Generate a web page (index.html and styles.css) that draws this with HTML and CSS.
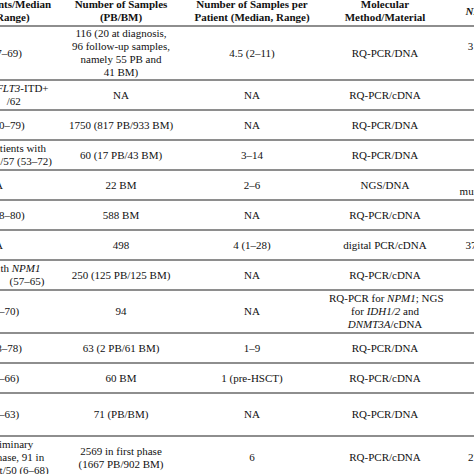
FILE: index.html
```html
<!DOCTYPE html>
<html lang="en">
<head>
<meta charset="utf-8">
<title>Table</title>
<link rel="stylesheet" href="styles.css">
</head>
<body>
<div class="viewport">
<table class="tbl">
<colgroup>
<col class="c1"><col class="c2"><col class="c3"><col class="c4"><col class="c5">
</colgroup>
<thead>
<tr>
<th class="first-head">Nos. of Patients/Median<br>Age, y (Range)</th>
<th>Number of Samples<br>(PB/BM)</th>
<th>Number of Samples per<br>Patient (Median, Range)</th>
<th>Molecular<br>Method/Material</th>
<th><i>NPM1</i> Kinetics</th>
</tr>
</thead>
<tbody>
<tr class="tall">
<td>158 (17–69)</td>
<td>116 (20 at diagnosis,<br>96 follow-up samples,<br>namely 55 PB and<br>41 BM)</td>
<td>4.5 (2–11)</td>
<td>RQ-PCR/DNA</td>
<td>3 log reduction<br>in PB</td>
</tr>
<tr>
<td>and 45 with <i>FLT3</i>-ITD+<br>pts.&emsp;&emsp;/62</td>
<td>NA</td>
<td>NA</td>
<td>RQ-PCR/cDNA</td>
<td>NA</td>
</tr>
<tr>
<td>1349 (20–79)</td>
<td>1750 (817 PB/933 BM)</td>
<td>NA</td>
<td>RQ-PCR/DNA</td>
<td>after<br>cycle 2</td>
</tr>
<tr>
<td>154 AML patients with<br><i>NPM1</i>/<i>FLT3</i>+/57 (53–72)</td>
<td>60 (17 PB/43 BM)</td>
<td>3–14</td>
<td>RQ-PCR/DNA</td>
<td>NA</td>
</tr>
<tr>
<td>NA</td>
<td>22 BM</td>
<td>2–6</td>
<td>NGS/DNA</td>
<td>persistent<br>mutations detected</td>
</tr>
<tr>
<td>1276 (18–80)</td>
<td>588 BM</td>
<td>NA</td>
<td>RQ-PCR/cDNA</td>
<td>end of<br>therapy</td>
</tr>
<tr>
<td>NA</td>
<td>498</td>
<td>4 (1–28)</td>
<td>digital PCR/cDNA</td>
<td>37 cases MRD+</td>
</tr>
<tr>
<td>27 AML with <i>NPM1</i><br>mutation &emsp;&emsp;(57–65)</td>
<td>250 (125 PB/125 BM)</td>
<td>NA</td>
<td>RQ-PCR/cDNA</td>
<td>NA</td>
</tr>
<tr>
<td>64 (19–70)</td>
<td>94</td>
<td>NA</td>
<td>RQ-PCR for <i>NPM1</i>; NGS<br>for <i>IDH1/2</i> and<br><i>DNMT3A</i>/cDNA</td>
<td>NA</td>
</tr>
<tr>
<td>148 (18–78)</td>
<td>63 (2 PB/61 BM)</td>
<td>1–9</td>
<td>RQ-PCR/DNA</td>
<td>pre-<br>HSCT</td>
</tr>
<tr>
<td>52 (24–66)</td>
<td>60 BM</td>
<td>1 (pre-HSCT)</td>
<td>RQ-PCR/cDNA</td>
<td>NA</td>
</tr>
<tr>
<td>38 (26–63)</td>
<td>71 (PB/BM)</td>
<td>NA</td>
<td>RQ-PCR/DNA</td>
<td>after<br>each<br>cycle</td>
</tr>
<tr>
<td>80 in preliminary<br>discovery phase, 91 in<br>second cohort/50 (6–68)</td>
<td>2569 in first phase<br>(1667 PB/902 BM)</td>
<td>6</td>
<td>RQ-PCR/cDNA</td>
<td>27 pts relapsed</td>
</tr>
</tbody>
</table>
</div>
</body>
</html>
```
FILE: styles.css
```css
html, body {
  margin: 0;
  padding: 0;
  background: #ffffff;
}

.viewport {
  width: 474px;
  height: 474px;
  overflow: hidden;
}

.tbl {
  border-collapse: collapse;
  table-layout: fixed;
  width: 638px;
  margin: -3px 0 0 -77px;
  font-family: "Liberation Serif", "Times New Roman", serif;
  font-size: 11px;
  line-height: 13px;
  color: #111111;
}

.c1 { width: 144px; }
.c2 { width: 108px; }
.c3 { width: 154px; }
.c4 { width: 112px; }
.c5 { width: 120px; }

.tbl th,
.tbl td {
  text-align: center;
  vertical-align: middle;
  padding: 1px 0;
  border-bottom: 2px solid #8e8e8e;
  white-space: nowrap;
}

.tbl th {
  font-weight: bold;
}

.tbl td {
  height: 26px;
}

.first-head {
  padding-left: 8px;
}

.tbl tr.tall td {
  padding: 0;
}
```
